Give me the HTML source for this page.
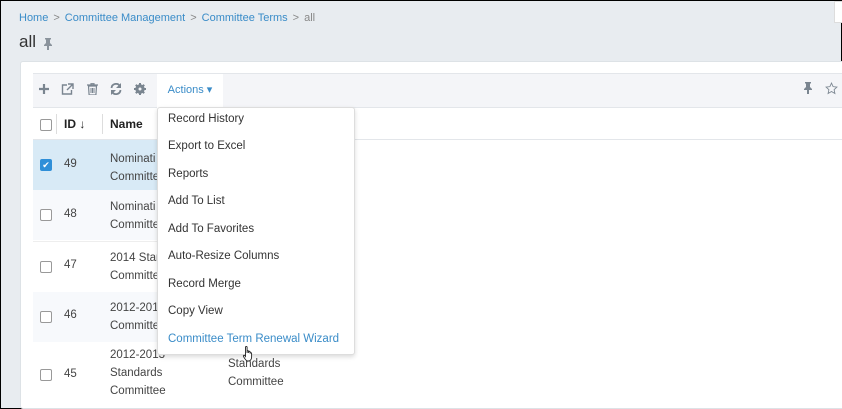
<!DOCTYPE html>
<html style="overflow:hidden;width:842px;height:409px"><head><style>
*{box-sizing:border-box;margin:0;padding:0}
body{width:842px;height:409px;overflow:hidden;background:#e8ecf0;font-family:"Liberation Sans",sans-serif;position:relative;border:1px solid #000}
.a{position:absolute}
.bc{left:18px;top:11px;font-size:11px;color:#3a8cc8}
.bc span{color:#888;margin:0 5px}
.t{left:18px;top:31px;font-size:17px;color:#333}
.panel{left:19px;top:60px;width:830px;height:348px;background:#fff;border-radius:3px;border:1px solid #dde2e6}
.tb{left:32px;top:72px;width:812px;height:35px;background:#f4f5f8;border-top:1px solid #e3e6ea;border-bottom:1px solid #e3e6ea}
.ic{top:82px}
.act{left:156px;top:73px;width:66px;height:34px;background:#fff;color:#3a8cc8;font-size:11px;line-height:33px;text-align:center}
.hdr{left:32px;top:107px;width:812px;height:32px;border-bottom:1px solid #e3e6ea;font-size:12px;font-weight:bold;color:#222}
.row{left:32px;width:300px;font-size:11.5px;color:#444}
.cb{position:absolute;left:7px;width:12px;height:12px;border:1px solid #999;border-radius:2px;background:#fff}
.dd{left:156px;top:106px;width:198px;height:248px;background:#fff;border:1px solid #ddd;border-radius:3px;box-shadow:0 2px 5px rgba(0,0,0,.15)}
.dd div{position:absolute;left:10px;font-size:11.5px;color:#333}
</style></head><body>
<div class="a bc">Home<span>&gt;</span>Committee Management<span>&gt;</span>Committee Terms<span>&gt;</span><b style="font-weight:normal;color:#888">all</b></div>
<div class="a t">all</div>
<svg class="a" style="left:42px;top:37px" width="10" height="12" viewBox="0 0 10 12"><path d="M2 0h6v1.5H7v3.5l2 2v1H6v4H4V8H1V7l2-2V1.5H2z" fill="#8a939c"/></svg>
<div class="a" style="left:833px;top:0;width:9px;height:22px;background:#fff;border:1px solid #ddd"></div>
<div class="a panel"></div>
<div class="a tb"></div>
<svg class="a ic" style="left:37px" width="12" height="12" viewBox="0 0 12 12"><path d="M6 1v10M1 6h10" stroke="#7a8590" stroke-width="2.2"/></svg>
<svg class="a ic" style="left:60px" width="13" height="12" viewBox="0 0 13 12"><path d="M6 2H1.5v9h9V7M7 1h5v5M12 1L6 7" stroke="#7a8590" stroke-width="1.4" fill="none"/></svg>
<svg class="a ic" style="left:86px" width="11" height="12" viewBox="0 0 11 12"><path d="M0 2h11M4 2V0.7h3V2M1.5 3h8l-.6 9H2.1z" stroke="#7a8590" stroke-width="1.2" fill="none"/><path d="M4 5v5M5.5 5v5M7 5v5" stroke="#7a8590"/></svg>
<svg class="a ic" style="left:109px" width="12" height="12" viewBox="0 0 12 12"><path d="M1.5 5A4.5 4.5 0 0 1 9.8 3M10.5 7A4.5 4.5 0 0 1 2.2 9" stroke="#7a8590" stroke-width="1.8" fill="none"/><path d="M11 0v5H6zM1 12V7h5z" fill="#7a8590"/></svg>
<svg class="a ic" style="left:133px" width="12" height="12" viewBox="0 0 12 12"><circle cx="6" cy="6" r="3.6" fill="none" stroke="#7a8590" stroke-width="2.2"/><path d="M6 0v12M0 6h12M1.8 1.8l8.4 8.4M10.2 1.8l-8.4 8.4" stroke="#7a8590" stroke-width="2"/><circle cx="6" cy="6" r="1.5" fill="#f4f5f8"/></svg>
<div class="a act">Actions &#x25BE;</div>
<svg class="a" style="left:802px;top:81px" width="10" height="12" viewBox="0 0 10 12"><path d="M2 0h6v1.5H7v3.5l2 2v1H6v4H4V8H1V7l2-2V1.5H2z" fill="#7a8590"/></svg>
<svg class="a" style="left:824px;top:81px" width="13" height="13" viewBox="0 0 24 24"><path d="M12 2l3 6.6 7 .8-5.2 4.8 1.5 7L12 17.6 5.7 21.2l1.5-7L2 9.4l7-.8z" fill="none" stroke="#7a8590" stroke-width="1.6"/></svg>
<div class="a hdr"><div class="cb" style="top:11px"></div><span class="a" style="left:31px;top:9px">ID &#x2193;</span><span class="a" style="left:77px;top:9px">Name</span><div class="a" style="left:23px;top:6px;width:1px;height:20px;background:#ddd"></div><div class="a" style="left:69px;top:6px;width:1px;height:20px;background:#ddd"></div></div>
<div class="a row" style="top:139px;height:50px;background:#d8eaf6"><div class="cb" style="top:19px;background:#2f8fd8;border-color:#2f8fd8;color:#fff;font-size:9px;line-height:10px;text-align:center">&#x2714;</div><span class="a" style="left:31px;top:18px">49</span><span class="a" style="left:77px;top:10px;line-height:18px">Nominati<br>Committe</span></div>
<div class="a row" style="top:189px;height:50px;background:#f7f9fc"><div class="cb" style="top:19px"></div><span class="a" style="left:31px;top:18px">48</span><span class="a" style="left:77px;top:8px;line-height:18px">Nominati<br>Committe</span></div>
<div class="a row" style="top:240px;height:50px;border-top:1px solid #eee"><div class="cb" style="top:19px"></div><span class="a" style="left:31px;top:17px">47</span><span class="a" style="left:77px;top:7px;line-height:18px">2014 Star<br>Committe</span></div>
<div class="a row" style="top:291px;height:50px;background:#f7f9fc"><div class="cb" style="top:19px"></div><span class="a" style="left:31px;top:17px">46</span><span class="a" style="left:77px;top:7px;line-height:18px">2012-201<br>Committe</span></div>
<div class="a row" style="top:342px;height:67px;width:400px"><div class="cb" style="top:26px"></div><span class="a" style="left:31px;top:25px">45</span><span class="a" style="left:77px;top:3px;line-height:18px">2012-2013<br>Standards<br>Committee</span><span class="a" style="left:195px;top:12px;line-height:18px">Standards<br>Committee</span></div>
<div class="a dd">
<div style="top:5px">Record History</div>
<div style="top:32px">Export to Excel</div>
<div style="top:60px">Reports</div>
<div style="top:87px">Add To List</div>
<div style="top:115px">Add To Favorites</div>
<div style="top:142px">Auto-Resize Columns</div>
<div style="top:170px">Record Merge</div>
<div style="top:197px">Copy View</div>
<div style="top:225px;color:#3a8cc8">Committee Term Renewal Wizard</div>
</div>
<svg class="a" style="left:241px;top:345px" width="13" height="16" viewBox="0 0 13 16"><path d="M3.5 1.2c0-1 1.6-1 1.6 0V7V5.5c0-1 1.5-1 1.5 0V7V6c0-1 1.5-1 1.5 0v1.5c0-1 1.5-1 1.5 0V11c0 2-1 4-3 4H5.5C4 15 3 13 1.5 10.5 1 9.5 2 8.8 2.8 9.6L3.5 10.5z" fill="#fff" stroke="#222" stroke-width="0.9"/></svg>
</body></html>
